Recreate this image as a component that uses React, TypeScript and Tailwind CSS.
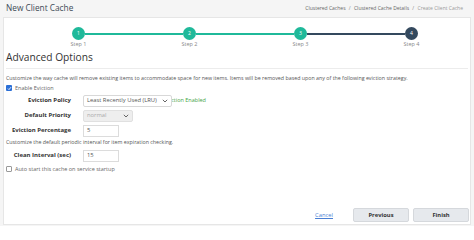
import React from 'react'

const steps = [
  { n: 1, left: '', right: 'bg-[#1fb99a]', done: true },
  { n: 2, left: 'bg-[#1fb99a]', right: 'bg-[#1fb99a]', done: true },
  { n: 3, left: 'bg-[#1fb99a]', right: 'bg-[#34495e]', done: true },
  { n: 4, left: 'bg-[#34495e]', right: '', done: false },
]

function Stepper() {
  return (
    <div className="flex pl-[19px] pt-[9px]">
      {steps.map((s) => (
        <div key={s.n} className="w-[111px] flex flex-col items-center">
          <div className="flex items-center w-full h-[13px]">
            <div className={`flex-1 h-[2px] ${s.left}`}></div>
            <div
              className={`w-[13px] h-[13px] rounded-full flex items-center justify-center text-white text-[5px] ${
                s.done ? 'bg-[#1fb99a]' : 'bg-[#34495e]'
              }`}
            >
              {s.n}
            </div>
            <div className={`flex-1 h-[2px] ${s.right}`}></div>
          </div>
          <div className="text-[5.5px] text-[#888] leading-[8px]">Step {s.n}</div>
        </div>
      ))}
    </div>
  )
}

function Chevron() {
  return (
    <svg width="6" height="4" viewBox="0 0 6 4" className="shrink-0">
      <path d="M0.8 0.8 L3 3 L5.2 0.8" stroke="#555" strokeWidth="0.9" fill="none" />
    </svg>
  )
}

function Row({ label, children }: { label: string; children: React.ReactNode }) {
  return (
    <div className="flex items-center h-[15px]">
      <div className="w-[65px] text-right font-bold text-[6px] text-[#333]">{label}</div>
      <div className="ml-[12px] flex items-center">{children}</div>
    </div>
  )
}

export default function App() {
  return (
    <div className="w-[474px] h-[226px] bg-[#f5f5f5] overflow-hidden font-['Open_Sans',sans-serif] text-[#444]">
      <div className="flex items-center justify-between h-[17px] px-[6px]">
        <div className="text-[8.3px] text-[#3d4a55]">New Client Cache</div>
        <div className="text-[5px] text-[#666] pr-[5px]">
          Clustered Caches <span className="mx-[2px] text-[#888]">/</span> Clustered Cache Details{' '}
          <span className="mx-[2px] text-[#888]">/</span> <span className="text-[#999]">Create Client Cache</span>
        </div>
      </div>

      <div className="mx-[3px] h-[208px] bg-white border border-[#e6e6e6] flex flex-col">
        <Stepper />

        <div className="px-[2px] mt-[2px]">
          <div className="text-[10.2px] text-[#333] leading-[14px]">Advanced Options</div>
          <div className="border-b border-[#ececec] mt-[4px]"></div>

          <div className="text-[5.3px] text-[#555] mt-[5px] leading-[8px]">
            Customize the way cache will remove existing items to accommodate space for new items. Items will be
            removed based upon any of the following eviction strategy.
          </div>

          <div className="flex items-center mt-[2px] h-[8px]">
            <div className="w-[6px] h-[6px] bg-[#2b6fd6] rounded-[1px] flex items-center justify-center">
              <svg width="5" height="5" viewBox="0 0 5 5">
                <path d="M1 2.6 L2 3.6 L4 1.2" stroke="white" strokeWidth="0.9" fill="none" />
              </svg>
            </div>
            <span className="text-[5.5px] text-[#666] ml-[3px]">Enable Eviction</span>
          </div>

          <div className="mt-[1px]">
            <Row label="Eviction Policy">
              <div className="relative z-10 w-[89px] h-[12px] bg-white border border-[#d8d8d8] rounded-[2px] flex items-center justify-between px-[3px]">
                <span className="text-[5.8px] text-[#555]">Least Recently Used (LRU)</span>
                <Chevron />
              </div>
              <span className="-ml-[8px] text-[5.5px] text-[#47a447]">Eviction Enabled</span>
            </Row>
            <Row label="Default Priority">
              <div className="w-[50px] h-[12px] bg-[#eeeeee] border border-[#e0e0e0] rounded-[2px] flex items-center justify-between px-[3px]">
                <span className="text-[5.8px] text-[#aaa]">normal</span>
                <Chevron />
              </div>
            </Row>
            <Row label="Eviction Percentage">
              <div className="w-[36px] h-[12px] bg-white border border-[#dcdcdc] flex items-center px-[3px]">
                <span className="text-[5.8px] text-[#555]">5</span>
              </div>
            </Row>
          </div>

          <div className="text-[5.3px] text-[#555] leading-[8px]">
            Customize the default periodic interval for item expiration checking.
          </div>

          <div className="mt-[2px]">
            <Row label="Clean Interval (sec)">
              <div className="w-[36px] h-[12px] bg-white border border-[#dcdcdc] flex items-center px-[3px]">
                <span className="text-[5.8px] text-[#555]">15</span>
              </div>
            </Row>
          </div>

          <div className="flex items-center h-[12px]">
            <div className="w-[6px] h-[6px] border border-[#999] rounded-[1px] bg-white"></div>
            <span className="text-[5.5px] text-[#666] ml-[3px]">Auto start this cache on service startup</span>
          </div>
        </div>

        <div className="mt-auto flex items-center justify-end pr-[1px] pb-[2px] gap-[4px]">
          <span className="text-[5.8px] text-[#4a7fd4] underline mr-[16px]">Cancel</span>
          <div className="w-[56px] h-[14px] bg-[#e6e9ed] border border-[#d5d8dc] rounded-[2px] flex items-center justify-center text-[5.8px] font-bold text-[#333]">
            Previous
          </div>
          <div className="w-[56px] h-[14px] bg-[#e6e9ed] border border-[#d5d8dc] rounded-[2px] flex items-center justify-center text-[5.8px] font-bold text-[#333]">
            Finish
          </div>
        </div>
      </div>
    </div>
  )
}
